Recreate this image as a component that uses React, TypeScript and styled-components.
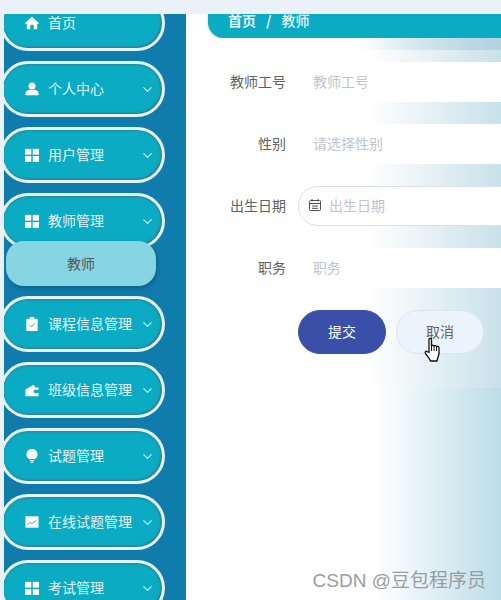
import styled, { createGlobalStyle } from "styled-components";
import { ChevronDown } from "lucide-react";
import { Fragment } from "react";
import type { ReactNode } from "react";

const GlobalStyle = createGlobalStyle`
  html, body {
    margin: 0;
    height: 100%;
    overflow: hidden;
    background: #ebf1f8;
  }
  * {
    box-sizing: border-box;
  }
`;

const Page = styled.div`
  display: flex;
  width: 501px;
  height: 600px;
  padding: 14px 0 0 4px;
  overflow: hidden;
  position: relative;
  font-family: "Noto Sans CJK SC", "Liberation Sans", sans-serif;
  font-size: 14px;
`;

const Sidebar = styled.aside`
  flex: 0 0 182px;
  background: #0f7cab;
  overflow: hidden;
`;

const MenuList = styled.div`
  display: flex;
  flex-direction: column;
  gap: 10px;
  margin: -19px 0 0 -4px;
`;

const MenuItem = styled.div`
  display: flex;
  align-items: center;
  flex: 0 0 56px;
  width: 165px;
  padding: 0 7px 0 22px;
  border: 3px solid #e4f3f6;
  border-radius: 28px;
  background: #0babc4;
  box-shadow: inset -1px -1px 2px rgba(90, 90, 90, 0.7),
    inset 0 1px 2px rgba(90, 90, 90, 0.4);
  color: #e2f5f8;
`;

const MenuIcon = styled.svg`
  flex: 0 0 14px;
  width: 14px;
  height: 14px;
  margin-right: 9px;
  fill: #fff;
`;

const MenuLabel = styled.span`
  flex: 1;
  padding-bottom: 2px;
  white-space: nowrap;
  line-height: 20px;
`;

const MenuArrow = styled(ChevronDown)`
  flex: 0 0 15px;
  color: #c5f0f5;
`;

const SubItem = styled.div`
  display: flex;
  align-items: center;
  justify-content: center;
  position: relative;
  width: 150px;
  height: 45px;
  margin: -18px 0 0 6px;
  padding-bottom: 2px;
  border-radius: 18px;
  background: #86d5e2;
  box-shadow: 1px 2px 4px rgba(10, 60, 90, 0.45);
  color: #555;
`;

const Main = styled.main`
  flex: 1;
  min-width: 0;
  overflow: hidden;
  background: linear-gradient(90deg, #fff 0, #fff 60%, #bcdde8 100%);
`;

const Crumbs = styled.div`
  display: flex;
  align-items: flex-end;
  gap: 10px;
  height: 50px;
  margin: -26px 0 0 22px;
  padding: 0 0 8px 20px;
  border-bottom-left-radius: 16px;
  background: #0babc4;
  box-shadow: 0 1px 2px rgba(60, 110, 130, 0.5);
  color: #e2f5f8;
  font-weight: 700;
  line-height: 20px;
`;

const CrumbLink = styled.span`
  font-weight: 500;
`;

const Panel = styled.div`
  height: 350px;
  padding-top: 24px;
  background: linear-gradient(90deg, transparent 54%, rgba(176, 208, 222, 0.85) 100%) top / 100% 12px no-repeat,
    linear-gradient(90deg, #fff 0, #fff 58%, #c9e1ea 100%);
`;

const Form = styled.form`
  display: flex;
  flex-direction: column;
  gap: 22px;
`;

const Row = styled.div`
  display: flex;
  align-items: center;
  gap: 12px;
  height: 40px;
  background: #fff;
`;

const ButtonRow = styled.div`
  display: flex;
  gap: 10px;
  margin-left: 112px;
`;

const Label = styled.label`
  flex: 0 0 100px;
  padding-bottom: 2px;
  color: #606266;
  text-align: right;
`;

const Field = styled.div<{ $bordered?: boolean }>`
  display: flex;
  align-items: center;
  flex: 0 0 260px;
  gap: 7px;
  height: 40px;
  padding: 0 4px 2px ${(p) => (p.$bordered ? "9px" : "15px")};
  border: ${(p) => (p.$bordered ? "1px solid #dcdfe6" : "none")};
  border-radius: 20px;
  background: #fff;
  color: #c0c4cc;
`;

const FieldText = styled.span`
  flex: 1;
`;

const SelectArrow = styled(ChevronDown)`
  color: #a0a4ac;
`;

const Button = styled.button<{ $primary?: boolean }>`
  width: 88px;
  height: 44px;
  padding-bottom: 3px;
  border: 1px solid ${(p) => (p.$primary ? "#3a50a8" : "#dbe6f1")};
  border-radius: 22px;
  background: ${(p) => (p.$primary ? "#3a50a8" : "#ebf4fd")};
  color: ${(p) => (p.$primary ? "#fff" : "#606266")};
  font: inherit;
`;

const Cursor = styled.svg`
  position: absolute;
  left: 423px;
  top: 337px;
  width: 20px;
  height: 26px;
`;

const Watermark = styled.div`
  position: absolute;
  right: 15px;
  bottom: 7px;
  color: #999da0;
  font-family: "Liberation Sans", "Noto Sans CJK SC", sans-serif;
  font-size: 19px;
  line-height: 24px;
`;

const home = (
  <path d="M8 .8 15.600 7.600c.5.5.2 1.200-.5 1.200H14v5.400c0 .5-.4.8-.8.8H10V11c0-.6-.4-1-1-1H7c-.6 0-1 .4-1 1v4H2.800c-.4 0-.8-.3-.8-.8V8.800H.9c-.7 0-1-.7-.5-1.200z" />
);
const user = (
  <>
    <circle cx="8" cy="4.600" r="4" />
    <path d="M.5 13c0-2.400 2-3.800 4-3.800h7c2 0 4 1.400 4 3.800v2H.5z" />
  </>
);
const grid = (
  <>
    <rect x="0" y="1" width="7.200" height="6.600" />
    <rect x="8.800" y="1" width="7.200" height="6.600" />
    <rect x="0" y="9.200" width="7.200" height="6.600" />
    <rect x="8.800" y="9.200" width="7.200" height="6.600" />
  </>
);
const clipboard = (
  <>
    <rect x="5.500" y="0" width="5" height="2.500" />
    <path d="M1.500 2h13v14h-13z" />
    <path d="m5 9 2.200 2.200L11 7.500" fill="none" stroke="#0babc4" strokeWidth="1" />
  </>
);
const wallet = (
  <path d="M.5 7.500 10 2l1.800 3H15.500v2.800h-4a1.800 1.800 0 0 0 0 3.600h4V15H.5z" />
);
const bulb = (
  <>
    <path d="M8 0a6.300 6.300 0 0 1 3.600 11.500H4.400A6.300 6.300 0 0 1 8 0z" />
    <rect x="5.500" y="12.500" width="5" height="1.300" />
    <rect x="6.500" y="14.500" width="3" height="1.300" />
  </>
);
const chart = (
  <>
    <path d="M.5 1.500h15v13H.5z" />
    <path d="m3 11 3-2.500 2 1.500 5-4" fill="none" stroke="#0babc4" strokeWidth="1" />
  </>
);

const menu: { label: string; icon: ReactNode; arrow?: boolean; sub?: string }[] = [
  { label: "首页", icon: home },
  { label: "个人中心", icon: user, arrow: true },
  { label: "用户管理", icon: grid, arrow: true },
  { label: "教师管理", icon: grid, arrow: true, sub: "教师" },
  { label: "课程信息管理", icon: clipboard, arrow: true },
  { label: "班级信息管理", icon: wallet, arrow: true },
  { label: "试题管理", icon: bulb, arrow: true },
  { label: "在线试题管理", icon: chart, arrow: true },
  { label: "考试管理", icon: grid, arrow: true },
];

function CalendarIcon() {
  return (
    <svg width="14" height="14" viewBox="0 0 14 14" fill="none" stroke="#4a4e55" strokeWidth="1">
      <rect x="1.500" y="2.500" width="11" height="10" rx="1" />
      <path d="M1.500 5.500h11M4 1v2.500M10 1v2.500M4 8h6M4 10.300h6" />
    </svg>
  );
}

export default function App() {
  return (
    <Page>
      <GlobalStyle />
      <Sidebar>
        <MenuList>
          {menu.map((item) => (
            <Fragment key={item.label}>
              <MenuItem>
                <MenuIcon viewBox="0 0 16 16">{item.icon}</MenuIcon>
                <MenuLabel>{item.label}</MenuLabel>
                {item.arrow && <MenuArrow size={15} strokeWidth={1.8} />}
              </MenuItem>
              {item.sub && <SubItem>{item.sub}</SubItem>}
            </Fragment>
          ))}
        </MenuList>
      </Sidebar>
      <Main>
        <Crumbs>
          <span>首页</span>
          <span>/</span>
          <CrumbLink>教师</CrumbLink>
        </Crumbs>
        <Panel>
          <Form>
            <Row>
              <Label>教师工号</Label>
              <Field>教师工号</Field>
            </Row>
            <Row>
              <Label>性别</Label>
              <Field>
                <FieldText>请选择性别</FieldText>
                <SelectArrow size={14} strokeWidth={1.2} />
              </Field>
            </Row>
            <Row>
              <Label>出生日期</Label>
              <Field $bordered>
                <CalendarIcon />
                <FieldText>出生日期</FieldText>
              </Field>
            </Row>
            <Row>
              <Label>职务</Label>
              <Field>职务</Field>
            </Row>
            <ButtonRow>
              <Button type="button" $primary>提交</Button>
              <Button type="button">取消</Button>
            </ButtonRow>
          </Form>
        </Panel>
      </Main>
      <Cursor viewBox="0 0 20 26">
        <path
          d="M6 2c1-1.200 2.500-.6 2.500.8V9c.6-1 2.200-1 2.600.2.700-.9 2.200-.7 2.500.5.800-.6 2.200-.3 2.400 1 .3 3 .2 6-.6 8.300-.6 2-1.200 3.500-1.500 5H7.500c-.5-2-2.500-4-5-7.500-1-1.500.5-3 2-1.800L6 15.500z"
          fill="#fff"
          stroke="#111"
          strokeWidth="1.300"
          strokeLinejoin="round"
        />
        <path d="M8.500 9v5M11.100 9.500V14M13.600 10v4" stroke="#111" strokeWidth="1" />
      </Cursor>
      <Watermark>CSDN @豆包程序员</Watermark>
    </Page>
  );
}
